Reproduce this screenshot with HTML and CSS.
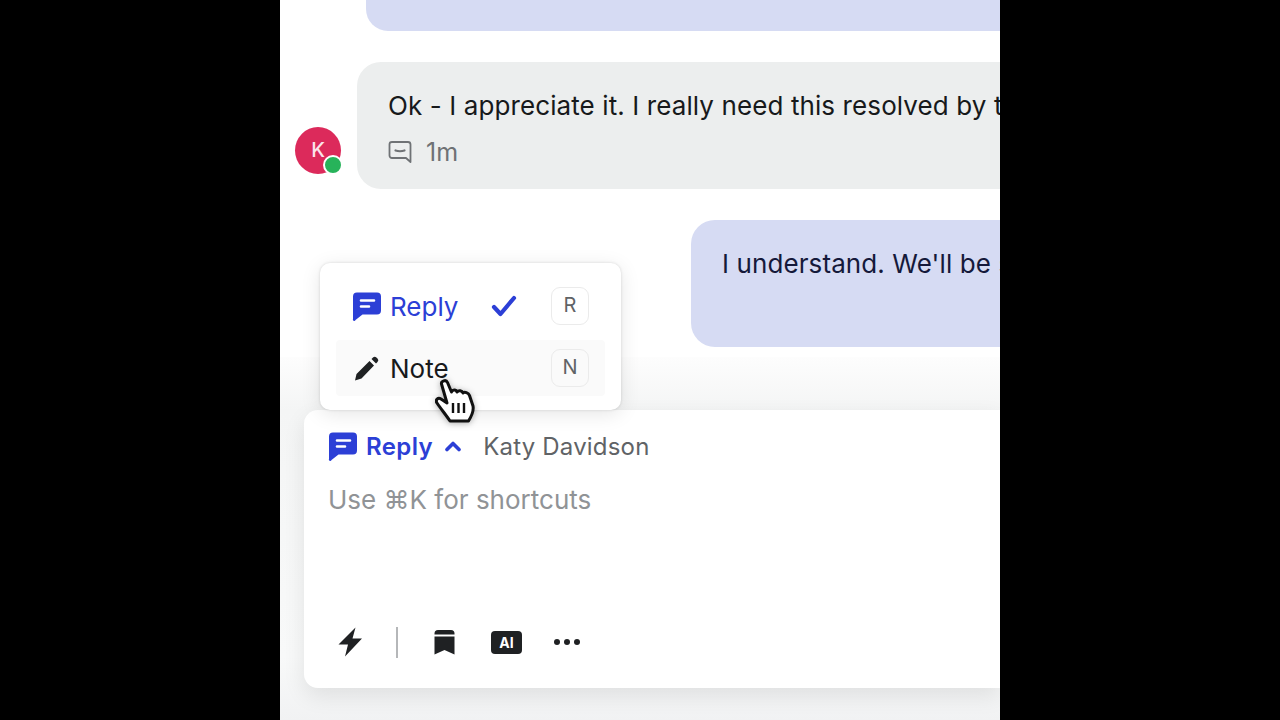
FILE: index.html
```html
<!DOCTYPE html>
<html lang="en">
<head>
  <meta charset="UTF-8" />
  <title>Reply</title>
  <link rel="stylesheet" href="styles.css">
</head>
<body>
  <div class="stage">
    <div class="thread">
      <div class="bubble bubble-top"></div>

      <div class="row-in">
        <div class="avatar">K<span class="presence"></span></div>
        <div class="bubble bubble-in">
          <div class="msg">Ok - I appreciate it. I really need this resolved by today</div>
          <div class="meta">
            <svg class="meta-icon" width="24" height="24" viewBox="0 0 24 24" fill="none" stroke="#6f7275" stroke-width="1.8" stroke-linejoin="round" stroke-linecap="round">
              <path d="M4 2h16a2.500 2.500 0 0 1 2.500 2.500V22l-4.500-4H4a2.500 2.500 0 0 1-2.500-2.500v-11A2.500 2.500 0 0 1 4 2z"/>
              <path stroke-width="2.200" d="M7.500 10.500c3 1 6 1 9 0"/>
            </svg>
            <span>1m</span>
          </div>
        </div>
      </div>

      <div class="bubble bubble-out">
        <div class="msg">I understand. We'll be sure to get this sorted</div>
      </div>
    </div>

    <div class="composer-wrap">
      <div class="composer">
        <div class="composer-head">
          <svg class="reply-icon" width="30" height="30" viewBox="0 0 30 30"><use href="#chat"/></svg>
          <span class="mode">Reply</span>
          <svg class="chevron" width="18" height="12" viewBox="0 0 18 12" fill="none" stroke="#2c3fd6" stroke-width="3.600" stroke-linecap="round" stroke-linejoin="round"><path d="M3 9.500l6-6 6 6"/></svg>
          <span class="recipient">Katy Davidson</span>
        </div>
        <div class="placeholder">Use ⌘K for shortcuts</div>
        <div class="toolbar">
          <svg class="tool-bolt" width="26" height="32" viewBox="0 0 26 32"><path fill="#1f2123" d="M18.500 1.500 1.500 18.500h9.500l-3 12 17-18h-9.500z"/></svg>
          <span class="divider"></span>
          <svg class="tool-mark" width="21" height="25" viewBox="0 0 21 25"><path fill="#1f2123" d="M4 0h13a3.500 3.500 0 0 1 3.500 3.500v1H.5v-1A3.500 3.500 0 0 1 4 0zM.5 6.500h20V24.500l-10-4.500-10 4.500z"/></svg>
          <span class="tool-ai">AI</span>
          <span class="tool-dots"><i></i><i></i><i></i></span>
        </div>
      </div>
    </div>

    <div class="menu">
      <div class="menu-item menu-item-on">
        <svg width="30" height="30" viewBox="0 0 30 30"><use href="#chat"/></svg>
        <span class="menu-label">Reply</span>
        <svg class="check" width="26" height="22" viewBox="0 0 26 22" fill="none" stroke="#2c3fd6" stroke-width="4.200" stroke-linecap="round" stroke-linejoin="round"><path d="M3 12l6.500 7L23 3"/></svg>
        <span class="key">R</span>
      </div>
      <div class="menu-item menu-item-hover">
        <svg width="30" height="30" viewBox="0 0 30 30"><path fill="#1f2123" d="M3 27.500l1.500-6.500L17.500 8l4.500 4.500L9.500 25.500zM19.500 6l1.500-1.500a2.400 2.400 0 0 1 3.400 0l1.100 1.100a2.400 2.400 0 0 1 0 3.400L24 10.500z"/></svg>
        <span class="menu-label">Note</span>
        <span class="key">N</span>
      </div>
    </div>

    <svg class="cursor" width="40" height="45" viewBox="0 0 40 45">
      <path fill="#fff" stroke="#111" stroke-width="3" stroke-linejoin="round" d="M6.500 5C6 2 11 0 12.500 3.500L16.500 13c1-2.500 4.500-3 5.500 0 1.500-2 5-1.500 6 1 1.500-1.500 5.500-.5 6.500 2.500L38 27c1 5-2 11-4.500 15H15C11 36 6 30 2 24c-2-3 1-6 4-4l6 4z"/>
      <path fill="none" stroke="#111" stroke-width="2.400" d="M18 24v10M23.500 24v10M29 24v10"/>
    </svg>

    <svg class="defs" width="0" height="0">
      <symbol id="chat" viewBox="0 0 30 30">
        <path fill="#2c3fd6" d="M5 1.500h20a4 4 0 0 1 4 4v14a4 4 0 0 1-4 4H10.500l-7 5.500a1.200 1.200 0 0 1-2.500-1V5.500a4 4 0 0 1 4-4z"/>
        <path fill="none" stroke="#fff" stroke-width="2.600" stroke-linecap="round" d="M9 9.500h13M9 15.500h8"/>
      </symbol>
    </svg>
  </div>
</body>
</html>
```

FILE: styles.css
```css
* {
  box-sizing: border-box;
}
body {
  margin: 0;
  height: 720px;
  background: #000;
  display: flex;
  justify-content: center;
  font-family: Inter, "Liberation Sans", sans-serif;
  overflow: hidden;
}
.stage {
  position: relative;
  width: 720px;
  height: 720px;
  background: #fff;
  overflow: hidden;
  display: flex;
  flex-direction: column;
}
.thread {
  display: flex;
  flex-direction: column;
  height: 357px;
  flex: none;
}
.bubble {
  flex: none;
}
.bubble-top {
  height: 31px;
  margin-left: 86px;
  background: #d6dbf3;
  border-bottom-left-radius: 22px;
}
.row-in {
  display: flex;
  align-items: flex-end;
  gap: 16px;
  margin-top: 31px;
  padding-left: 15px;
}
.avatar {
  position: relative;
  width: 46px;
  height: 47px;
  margin-bottom: 15px;
  flex: none;
  border-radius: 50%;
  background: #dc2a5b;
  color: #fbe3ea;
  font-size: 20px;
  font-weight: 500;
  line-height: 46px;
  text-align: center;
}
.presence {
  position: absolute;
  right: -2px;
  bottom: -1px;
  width: 20px;
  height: 20px;
  border-radius: 50%;
  background: #27b35a;
  border: 2.500px solid #fff;
}
.bubble-in {
  flex: 1;
  height: 127px;
  min-width: 0;
  padding: 28px 0 0 31px;
  background: #eceeee;
  border-radius: 24px 0 0 24px;
  overflow: hidden;
}
.msg {
  font-size: 26px;
  line-height: 32px;
  letter-spacing: 0.1px;
  color: #17191b;
  white-space: nowrap;
}
.meta {
  display: flex;
  align-items: center;
  gap: 14px;
  margin-top: 15px;
  font-size: 25px;
  line-height: 30px;
  color: #6f7275;
}
.bubble-out {
  height: 127px;
  margin-top: 31px;
  margin-left: 411px;
  padding: 28px 0 0 31px;
  background: #d6dbf3;
  border-radius: 24px 0 0 24px;
  overflow: hidden;
}
.bubble-out .msg {
  color: #15193a;
}
.composer-wrap {
  flex: 1;
  padding: 53px 0 32px 24px;
  background: linear-gradient(180deg, #fdfdfd 0, #f4f5f5 53px, #f8f9f9 300px, #f1f2f3 363px);
}
.composer {
  height: 278px;
  background: #fff;
  border-radius: 14px 0 0 14px;
  padding: 20px 0 0 24px;
  display: flex;
  flex-direction: column;
  box-shadow: 0 8px 22px rgba(0,0,0,0.09);
}
.composer-head {
  display: flex;
  align-items: center;
  height: 32px;
  font-size: 24px;
}
.composer-head .reply-icon {
  margin-right: 8px;
}
.mode {
  color: #2c3fd6;
  font-weight: 600;
  letter-spacing: 0.4px;
}
.chevron {
  margin-left: 11px;
}
.recipient {
  margin-left: 21px;
  letter-spacing: 0.2px;
  color: #606366;
}
.placeholder {
  margin-top: 22px;
  font-size: 26px;
  line-height: 32px;
  color: #909396;
}
.toolbar {
  display: flex;
  align-items: center;
  margin-top: 110px;
  height: 32px;
  padding-left: 9px;
}
.divider {
  width: 2px;
  height: 31px;
  margin-left: 33px;
  background: #b5b7b9;
}
.tool-mark {
  margin-left: 36px;
}
.tool-ai {
  width: 31px;
  height: 23px;
  margin-left: 36px;
  border-radius: 4px;
  background: #1f2123;
  color: #fff;
  font-size: 14px;
  font-weight: 700;
  line-height: 23px;
  text-align: center;
}
.tool-dots {
  display: flex;
  gap: 4px;
  margin-left: 32px;
}
.tool-dots i {
  width: 6px;
  height: 6px;
  border-radius: 50%;
  background: #1f2123;
}
.menu {
  position: absolute;
  left: 40px;
  top: 263px;
  width: 301px;
  height: 147px;
  padding: 12px 16px 0;
  background: #fff;
  border-radius: 10px;
  box-shadow: 0 0 3px rgba(0,0,0,0.14), 0 4px 20px rgba(0,0,0,0.1);
}
.menu-item {
  display: flex;
  align-items: center;
  height: 62px;
  padding: 0 16px;
  font-size: 26px;
  border-radius: 4px;
}
.menu-item svg {
  flex: none;
}
.menu-label {
  margin-left: 8px;
}
.menu-item-on {
  color: #2c3fd6;
}
.menu-item-hover {
  height: 56px;
  margin-top: 3px;
  background: #fafafa;
  color: #17191b;
}
.check {
  margin-left: 33px;
}
.key {
  width: 38px;
  height: 38px;
  margin-left: auto;
  border: 1.500px solid #ebebeb;
  border-radius: 9px;
  background: #fff;
  color: #606366;
  font-size: 20px;
  line-height: 35px;
  text-align: center;
}
.menu-item-hover .key {
  background: transparent;
}
.cursor {
  position: absolute;
  left: 155px;
  top: 379px;
  filter: drop-shadow(0 1px 3px rgba(0,0,0,0.3));
}
.defs {
  position: absolute;
}
```
